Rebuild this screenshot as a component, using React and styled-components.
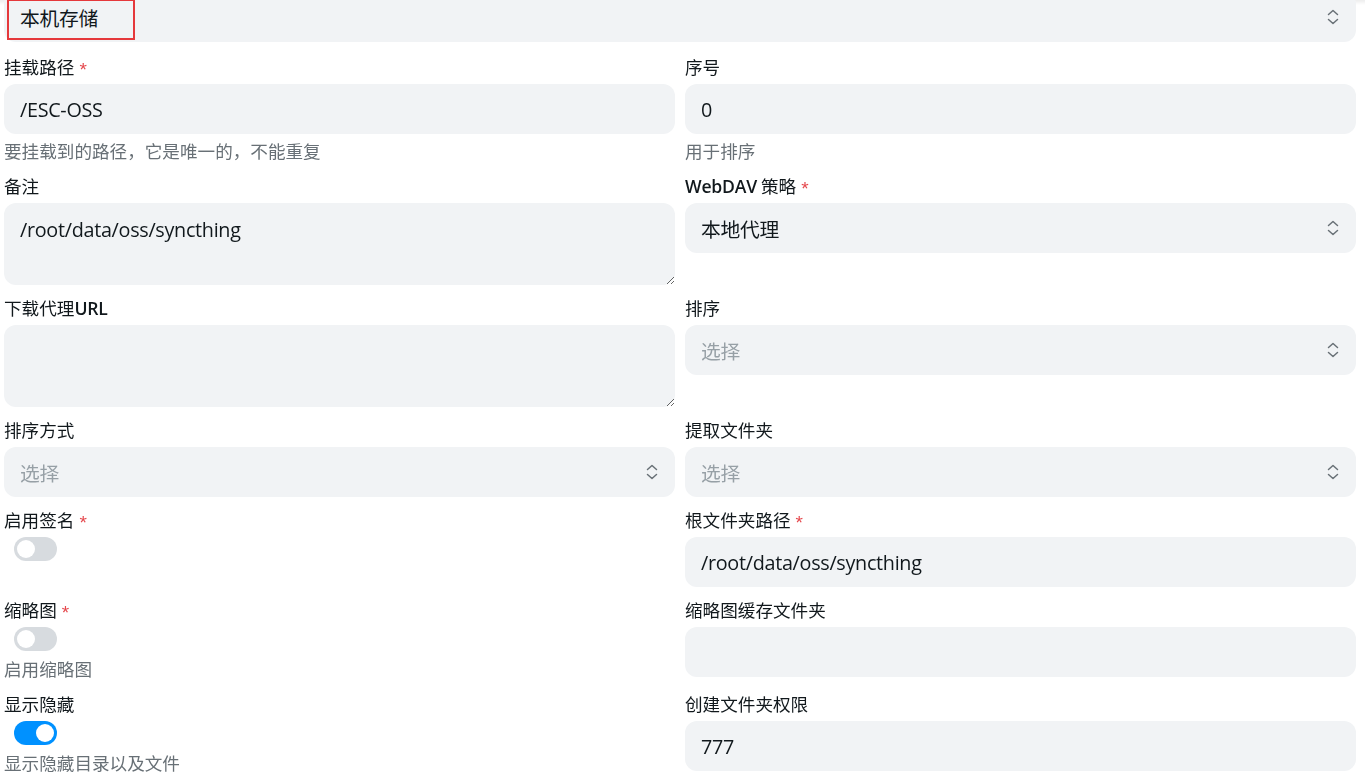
import React from "react";
import styled, { createGlobalStyle } from "styled-components";

const GlobalStyle = createGlobalStyle`
  html, body {
    margin: 0;
    padding: 0;
    background: #ffffff;
    overflow: hidden;
  }
  body {
    font-family: "Noto Sans CJK SC", "Noto Sans", sans-serif;
    color: #11181c;
  }
`;

const Page = styled.div`
  position: relative;
  width: 1352px;
  padding: 0 9px 0 4px;
  margin-top: -8px;
`;

const TopShadow = styled.div`
  position: fixed;
  top: 0;
  left: 0;
  right: 0;
  height: 5px;
  background: linear-gradient(rgba(0, 0, 0, 0.07), rgba(0, 0, 0, 0));
  pointer-events: none;
`;

const DriverRow = styled.div`
  position: relative;
  margin-bottom: 13px;
`;

const Highlight = styled.div`
  position: absolute;
  left: 3px;
  top: 7px;
  width: 128px;
  height: 41px;
  box-sizing: border-box;
  border: 2px solid #e5383b;
  pointer-events: none;
`;

const Grid = styled.div`
  display: grid;
  grid-template-columns: 1fr 1fr;
  column-gap: 10px;
  row-gap: 11px;
  align-items: start;
`;

const Field = styled.div`
  display: flex;
  flex-direction: column;
  min-width: 0;
`;

const Label = styled.div`
  font-size: 17.6px;
  line-height: 24px;
  height: 24px;
  margin-bottom: 5px;
  color: #11181c;
  white-space: nowrap;
`;

const Latin = styled.span`
  font-weight: 600;
  font-family: "Open Sans", sans-serif;
  letter-spacing: -0.2px;
`;

const Star = styled.span`
  color: #e5484d;
  margin-left: 5px;
  font-size: 19px;
  font-family: "Liberation Sans", sans-serif;
  position: relative;
  top: 2px;
`;

const Help = styled.div`
  font-size: 17.6px;
  line-height: 24px;
  margin-top: ${(p) => p.$gap || 6}px;
  color: #687076;
`;

const Input = styled.div`
  box-sizing: border-box;
  height: 50px;
  padding: 0 16px;
  display: flex;
  align-items: center;
  background: #f1f3f5;
  border-radius: 12px;
  font-size: 19.8px;
  letter-spacing: -0.3px;
  color: ${(p) => (p.$placeholder ? "#97a0a6" : "#11181c")};
  font-family: "Open Sans", "Noto Sans CJK SC", sans-serif;
`;

const SelectBox = styled(Input)`
  justify-content: space-between;
  padding-right: 17px;
`;

const TextArea = styled.textarea`
  box-sizing: border-box;
  display: block;
  width: 100%;
  height: 82px;
  margin: 0;
  padding: 13px 16px;
  border: none;
  outline: none;
  background: #f1f3f5;
  border-radius: 12px;
  font-size: 19.8px;
  letter-spacing: -0.3px;
  line-height: 28px;
  color: #11181c;
  font-family: "Open Sans", "Noto Sans CJK SC", sans-serif;
  resize: vertical;
`;

const Track = styled.div`
  box-sizing: border-box;
  width: 43px;
  height: 24px;
  margin-left: 10px;
  border-radius: 12px;
  padding: 3px;
  display: flex;
  justify-content: ${(p) => (p.$on ? "flex-end" : "flex-start")};
  background: ${(p) => (p.$on ? "#0091ff" : "#d7dbdf")};
`;

const Thumb = styled.div`
  width: 18px;
  height: 18px;
  border-radius: 50%;
  background: #ffffff;
`;

const SortIcon = () => (
  <svg width="12" height="16" viewBox="0 0 12 16" fill="none">
    <path
      d="M1.5 5.5L6 1.5L10.5 5.5M1.5 10.5L6 14.5L10.5 10.5"
      stroke="#687076"
      strokeWidth="1.5"
      strokeLinecap="round"
      strokeLinejoin="round"
    />
  </svg>
);

const Select = ({ value, placeholder }) => (
  <SelectBox $placeholder={!value}>
    <span>{value || placeholder}</span>
    <SortIcon />
  </SelectBox>
);

const Switch = ({ on }) => (
  <Track $on={on}>
    <Thumb />
  </Track>
);

const FieldLabel = ({ children, required }) => (
  <Label>
    {children}
    {required && <Star>*</Star>}
  </Label>
);

export default function App() {
  return (
    <>
      <GlobalStyle />
      <TopShadow />
      <Page>
        <DriverRow>
          <Select value="本机存储" />
          <Highlight />
        </DriverRow>
        <Grid>
          <Field>
            <FieldLabel required>挂载路径</FieldLabel>
            <Input>/ESC-OSS</Input>
            <Help $gap={5}>要挂载到的路径，它是唯一的，不能重复</Help>
          </Field>
          <Field>
            <FieldLabel>序号</FieldLabel>
            <Input>0</Input>
            <Help $gap={5}>用于排序</Help>
          </Field>

          <Field>
            <FieldLabel>备注</FieldLabel>
            <TextArea defaultValue="/root/data/oss/syncthing" />
          </Field>
          <Field>
            <FieldLabel required>
              <Latin>WebDAV</Latin> 策略
            </FieldLabel>
            <Select value="本地代理" />
          </Field>

          <Field>
            <FieldLabel>
              下载代理<Latin>URL</Latin>
            </FieldLabel>
            <TextArea defaultValue="" />
          </Field>
          <Field>
            <FieldLabel>排序</FieldLabel>
            <Select placeholder="选择" />
          </Field>

          <Field>
            <FieldLabel>排序方式</FieldLabel>
            <Select placeholder="选择" />
          </Field>
          <Field>
            <FieldLabel>提取文件夹</FieldLabel>
            <Select placeholder="选择" />
          </Field>

          <Field>
            <FieldLabel required>启用签名</FieldLabel>
            <Switch on={false} />
          </Field>
          <Field>
            <FieldLabel required>根文件夹路径</FieldLabel>
            <Input>/root/data/oss/syncthing</Input>
          </Field>

          <Field>
            <FieldLabel required>缩略图</FieldLabel>
            <Switch on={false} />
            <Help>启用缩略图</Help>
          </Field>
          <Field>
            <FieldLabel>缩略图缓存文件夹</FieldLabel>
            <Input />
          </Field>

          <Field>
            <FieldLabel>显示隐藏</FieldLabel>
            <Switch on />
            <Help>显示隐藏目录以及文件</Help>
          </Field>
          <Field>
            <FieldLabel>创建文件夹权限</FieldLabel>
            <Input>777</Input>
          </Field>
        </Grid>
      </Page>
    </>
  );
}
